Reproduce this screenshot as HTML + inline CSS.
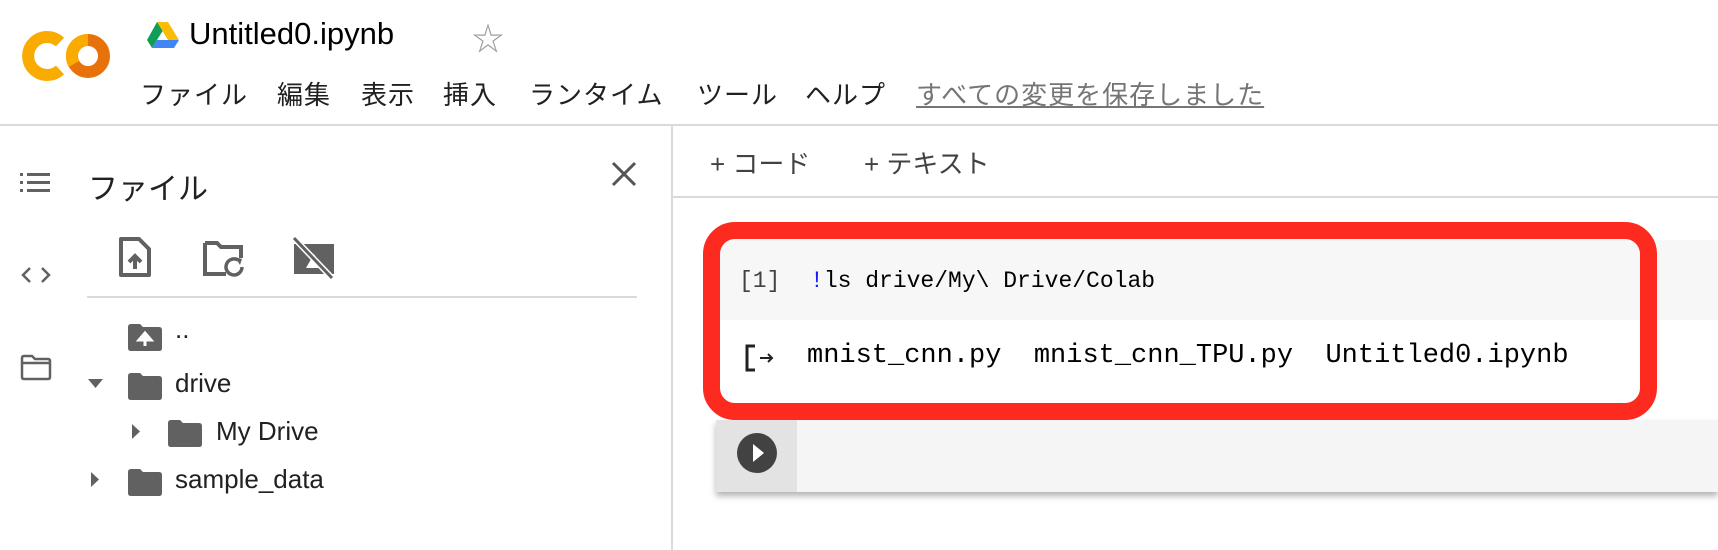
<!DOCTYPE html>
<html><head><meta charset="utf-8"><style>
*{margin:0;padding:0;box-sizing:border-box}
body{width:1718px;height:550px;overflow:hidden;background:#fff;font-family:"Liberation Sans","Noto Sans CJK JP",sans-serif;color:#212121;position:relative}
.a{position:absolute;white-space:pre}
.menu{font-size:26px;top:75px;color:#202020;letter-spacing:1px}
.tree{font-size:26px;color:#212121}
.mono{font-family:"Liberation Mono","DejaVu Sans Mono",monospace}
</style></head><body>
<!-- logo -->
<svg class="a" style="left:2px;top:0" width="120" height="110" viewBox="0 0 120 110">
<path d="M58 42 A19 19 0 1 0 58 70" fill="none" stroke="#f9ab00" stroke-width="12"/>
<circle cx="86" cy="56" r="16" fill="none" stroke="#e8710a" stroke-width="12"/>
<path d="M86 40 A16 16 0 0 0 72 64" fill="none" stroke="#f9ab00" stroke-width="12"/>
</svg>
<!-- drive logo -->
<svg class="a" style="left:147px;top:22px" width="32" height="26" viewBox="0 0 32 26">
<polygon points="10,0 21,0 15,10 5,26 0,18" fill="#0f9d58"/>
<polygon points="10,0 21,0 32,18 21,18" fill="#fbbc04"/>
<polygon points="5,26 27,26 32,18 10,18" fill="#4285f4"/>
</svg>
<div class="a" style="left:189px;top:16px;font-size:31px;color:#000">Untitled0.ipynb</div>
<div class="a" style="left:472px;top:14px;font-size:32px;color:#9e9e9e">☆</div>
<div class="a menu" style="left:140px">ファイル</div>
<div class="a menu" style="left:277px">編集</div>
<div class="a menu" style="left:361px">表示</div>
<div class="a menu" style="left:443px">挿入</div>
<div class="a menu" style="left:529px">ランタイム</div>
<div class="a menu" style="left:697px">ツール</div>
<div class="a menu" style="left:805px">ヘルプ</div>
<div class="a menu" style="left:916px;color:#757575;text-decoration:underline">すべての変更を保存しました</div>
<div class="a" style="left:0;top:124px;width:1718px;height:2px;background:#dadada"></div>
<div class="a" style="left:671px;top:126px;width:2px;height:424px;background:#dadada"></div>
<!-- left rail -->
<svg class="a" style="left:20px;top:172px" width="32" height="22" viewBox="0 0 32 22" fill="#616161">
<rect x="0" y="1" width="3" height="3"/><rect x="7" y="1" width="23" height="3"/>
<rect x="0" y="9" width="3" height="3"/><rect x="7" y="9" width="23" height="3"/>
<rect x="0" y="17" width="3" height="3"/><rect x="7" y="17" width="23" height="3"/></svg>
<svg class="a" style="left:20px;top:265px" width="32" height="20" viewBox="0 0 32 20" fill="none" stroke="#616161" stroke-width="2.5">
<path d="M10 3 L3 10 L10 17"/><path d="M22 3 L29 10 L22 17"/></svg>
<svg class="a" style="left:20px;top:354px" width="32" height="27" viewBox="0 0 32 27" fill="none" stroke="#616161" stroke-width="2.5">
<path d="M2 4 Q2 2 4 2 H12 L15 5 H28 Q30 5 30 7 V23 Q30 25 28 25 H4 Q2 25 2 23 Z"/><path d="M2 9 H30"/></svg>
<div class="a" style="left:88px;top:164px;font-size:30px;color:#212121">ファイル</div>
<svg class="a" style="left:610px;top:160px" width="28" height="28" viewBox="0 0 28 28" stroke="#555" stroke-width="3"><path d="M3 3 L25 25 M25 3 L3 25"/></svg>
<!-- toolbar icons -->
<svg class="a" style="left:118px;top:237px" width="34" height="40" viewBox="0 0 34 40">
<path d="M3 2 H21 L31 12 V38 H3 Z" fill="none" stroke="#616161" stroke-width="4" stroke-linejoin="round"/>
<path d="M17 32 V20 M11 25 L17 19 L23 25" fill="none" stroke="#616161" stroke-width="4"/></svg>
<svg class="a" style="left:202px;top:240px" width="44" height="38" viewBox="0 0 44 38">
<path d="M3 3 H15 L19 7 H39 V18" fill="none" stroke="#616161" stroke-width="4"/>
<path d="M3 3 V34 H24" fill="none" stroke="#616161" stroke-width="4"/>
<path d="M40 27 A8 8 0 1 1 36 20" fill="none" stroke="#616161" stroke-width="3.5"/><path d="M33 17 L40 19 L38 25" fill="#616161"/></svg>
<svg class="a" style="left:292px;top:236px" width="44" height="44" viewBox="0 0 44 44">
<rect x="2" y="8" width="40" height="30" fill="#616161"/>
<path d="M14 32 L22 18 L30 32 Z" fill="#fff"/>
<path d="M2 2 L40 42" stroke="#fff" stroke-width="6"/><path d="M2 2 L40 42" stroke="#616161" stroke-width="3"/></svg>
<div class="a" style="left:87px;top:296px;width:550px;height:2px;background:#dadada"></div>
<!-- tree -->
<svg class="a" style="left:128px;top:324px" width="34" height="27" viewBox="0 0 34 27"><path d="M0 3 Q0 0 3 0 H12 L15 3 H31 Q34 3 34 6 V24 Q34 27 31 27 H3 Q0 27 0 24Z" fill="#616161"/><path d="M17 22 V14 M11 16 L17 9 L23 16 Z" stroke="#fff" stroke-width="3" fill="#fff"/></svg>
<div class="a tree" style="left:175px;top:314px">..</div>
<svg class="a" style="left:88px;top:379px" width="16" height="10"><path d="M0 0 H15 L7.5 9Z" fill="#616161"/></svg>
<svg class="a" style="left:128px;top:373px" width="34" height="27" viewBox="0 0 34 27"><path d="M0 3 Q0 0 3 0 H12 L15 3 H31 Q34 3 34 6 V24 Q34 27 31 27 H3 Q0 27 0 24Z" fill="#616161"/></svg>
<div class="a tree" style="left:175px;top:368px">drive</div>
<svg class="a" style="left:132px;top:424px" width="10" height="16"><path d="M0 0 V15 L8 7.5Z" fill="#616161"/></svg>
<svg class="a" style="left:168px;top:420px" width="34" height="27" viewBox="0 0 34 27"><path d="M0 3 Q0 0 3 0 H12 L15 3 H31 Q34 3 34 6 V24 Q34 27 31 27 H3 Q0 27 0 24Z" fill="#616161"/></svg>
<div class="a tree" style="left:216px;top:416px">My Drive</div>
<svg class="a" style="left:91px;top:472px" width="10" height="16"><path d="M0 0 V15 L8 7.5Z" fill="#616161"/></svg>
<svg class="a" style="left:128px;top:469px" width="34" height="27" viewBox="0 0 34 27"><path d="M0 3 Q0 0 3 0 H12 L15 3 H31 Q34 3 34 6 V24 Q34 27 31 27 H3 Q0 27 0 24Z" fill="#616161"/></svg>
<div class="a tree" style="left:175px;top:464px">sample_data</div>
<!-- right toolbar -->
<div class="a" style="left:710px;top:144px;font-size:26px;color:#424242">+ コード</div>
<div class="a" style="left:864px;top:144px;font-size:26px;color:#424242">+ テキスト</div>
<div class="a" style="left:673px;top:196px;width:1045px;height:2px;background:#dadada"></div>
<!-- cells -->
<div class="a" style="left:716px;top:240px;width:1002px;height:80px;background:#f7f7f7"></div>
<div class="a" style="left:716px;top:420px;width:1002px;height:72px;background:#f5f5f5;box-shadow:0 4px 6px rgba(0,0,0,.3)"></div>
<div class="a" style="left:716px;top:420px;width:81px;height:72px;background:#e3e3e3"></div>
<svg class="a" style="left:737px;top:433px" width="40" height="40"><circle cx="20" cy="20" r="20" fill="#424242"/><path d="M16 11 L27 20 L16 29Z" fill="#fff"/></svg>
<div class="a" style="left:703px;top:222px;width:954px;height:198px;border:17px solid #fd2a1f;border-radius:32px;background:linear-gradient(#f7f7f7 0,#f7f7f7 81px,#fff 81px)"></div>
<div class="a mono" style="left:739px;top:268px;font-size:23px;color:#424242">[1]</div>
<div class="a mono" style="left:810px;top:268px;font-size:23px;color:#000"><span style="color:#1a1aff">!</span>ls drive/My\ Drive/Colab</div>
<svg class="a" style="left:745px;top:344px" width="30" height="28" viewBox="0 0 30 28" fill="none" stroke="#212121" stroke-width="3"><path d="M10 2 H2 V26 H10"/><path d="M15 14 H27 M23 10 L27 14 L23 18" stroke-width="2"/></svg>
<div class="a mono" style="left:807px;top:341px;font-size:27px;color:#000">mnist_cnn.py  mnist_cnn_TPU.py  Untitled0.ipynb</div>
</body></html>
